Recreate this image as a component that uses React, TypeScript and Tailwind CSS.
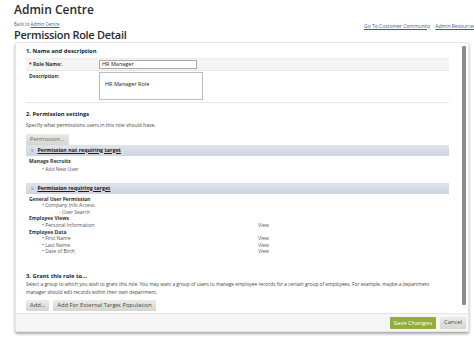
import React from 'react';

const FONT = { fontFamily: '"Open Sans", "Liberation Sans", sans-serif' };

const Bar = ({ label }: { label: string }) => (
  <div className="flex items-center h-[11px] bg-gradient-to-b from-[#dfe4ec] to-[#ced5e0] pl-[5px]">
    <span className="text-[5px] text-[#778] mr-[4px]">v</span>
    <span className="text-[5.3px] font-bold underline text-[#1a1a1a]">{label}</span>
  </div>
);

const GrayButton = ({ children, className = '' }: { children: React.ReactNode; className?: string }) => (
  <button type="button" className={`block h-[11px] px-[4px] bg-gradient-to-b from-[#ebebe7] to-[#d6d6d0] rounded-[1px] text-[5.8px] text-[#444] leading-none ${className}`}>{children}</button>
);

const Item = ({ children, view, indent = 'pl-[13px]' }: { children: React.ReactNode; view?: boolean; indent?: string }) => (
  <div className="flex h-[6.6px] items-center">
    <span className={`${indent} w-[229px] shrink-0`}>{children}</span>
    {view && <span>View</span>}
  </div>
);

export default function App() {
  return (
    <div style={FONT} className="w-[474px] h-[345px] bg-white overflow-hidden text-[#333]">
      <div className="pl-[14px] pt-[2px]">
        <div className="text-[12px] font-semibold leading-[15px] text-[#2b2b2b]">Admin Centre</div>
        <div className="flex items-end mt-[4px] h-[7px] whitespace-nowrap">
          <span className="w-[350px] shrink-0 text-[4.5px] text-[#555]">Back to <span className="underline text-[#2a62a8]">Admin Centre</span></span>
          <div className="flex gap-[5px] text-[5px] text-[#2a62a8] underline translate-y-[2px]">
            <span>Go To Customer Community</span>
            <span>Admin Resources</span>
          </div>
        </div>
        <div className="text-[11px] font-semibold leading-[15px] tracking-[-0.3px] text-[#2b2b2b] -mt-[1px]">Permission Role Detail</div>
      </div>

      <div className="ml-[15px] w-[454px] h-[290px] bg-white border border-[#e6e6e6] rounded-[2px] shadow-[0_2px_3px_rgba(0,0,0,0.35)] flex flex-col">
        <div className="flex flex-1 min-h-0">
          <div className="flex-1 pl-[10px] pr-[10px] pt-[4px]">
            <div className="text-[5.8px] leading-[8px] font-bold text-[#222]">1. Name and description</div>
            <div className="mt-[3px] border-t border-[#ececec]">
              <div className="flex items-center h-[12px] bg-[#f4f4f4] border-b border-[#e6e6e6]">
                <span className="w-[73px] pl-[3px] text-[5px] font-bold text-[#333]"><span className="text-[#c00]">*</span> Role Name:</span>
                <div className="w-[98px] h-[9px] border border-[#aaa] bg-white text-[5.5px] pl-[2px] leading-[7px] text-[#222]">HR Manager</div>
              </div>
              <div className="flex h-[32px] border-b border-[#e6e6e6]">
                <span className="w-[73px] pl-[3px] pt-[2px] text-[5px] font-bold text-[#333]">Description:</span>
                <div className="mt-[1px] w-[104px] h-[28px] border border-[#bbb] bg-white text-[5.5px] pl-[5px] pt-[7px] text-[#222]">HR Manager Role</div>
              </div>
            </div>

            <div className="mt-[7px] text-[5.8px] leading-[8px] font-bold text-[#222]">2. Permission settings</div>
            <div className="mt-[4px] text-[5px] leading-[7px] text-[#444]">Specify what permissions users in this role should have.</div>
            <GrayButton className="mt-[5px] text-[#666]">Permission...</GrayButton>
            <Bar label="Permission not requiring target" />
            <div className="pl-[3px] pt-[1px] text-[5px] leading-[8px]">
              <div className="font-bold text-[#333]">Manage Recruits</div>
              <div className="pl-[13px] text-[#555]">• Add New User</div>
            </div>
            <div className="h-[10px]" />
            <Bar label="Permission requiring target" />
            <div className="pl-[3px] pt-[2px] text-[5px] text-[#555]">
              <div className="h-[6.6px] flex items-center font-bold text-[#333]">General User Permission</div>
              <Item>• Company Info Access</Item>
              <Item indent="pl-[30px]">◦ User Search</Item>
              <div className="h-[6.6px] flex items-center font-bold text-[#333]">Employee Views</div>
              <Item view>• Personal Information</Item>
              <div className="h-[6.6px] flex items-center font-bold text-[#333]">Employee Data</div>
              <Item view>• First Name</Item>
              <Item view>• Last Name</Item>
              <Item view>• Date of Birth</Item>
            </div>

            <div className="mt-[17px] text-[5.8px] leading-[8px] font-bold text-[#222]">3. Grant this role to...</div>
            <div className="text-[4.8px] leading-[8px] text-[#444]">
              Select a group to which you wish to grant this role. You may want a group of users to manage employee records for a certain group of employees. For example, maybe a department manager should edit records within their own department.
            </div>
            <div className="mt-[4px] flex gap-[4px]">
              <GrayButton>Add...</GrayButton>
              <GrayButton>Add For External Target Population</GrayButton>
            </div>
          </div>
          <div className="w-[9px] pt-[3px] pb-[8px] flex justify-center">
            <div className="w-[4px] h-full bg-[#8c8c8c] rounded-[1px]" />
          </div>
        </div>
        <div className="h-[18px] bg-[#f6f6f6] border-t border-[#e4e4e4] flex items-center justify-end gap-[4px] pr-[2px]">
          <button type="button" className="h-[12px] px-[4px] bg-[#93ad3c] rounded-[1px] text-[6px] text-white leading-none">Save Changes</button>
          <GrayButton className="h-[12px] text-[#333]">Cancel</GrayButton>
        </div>
      </div>
    </div>
  );
}
